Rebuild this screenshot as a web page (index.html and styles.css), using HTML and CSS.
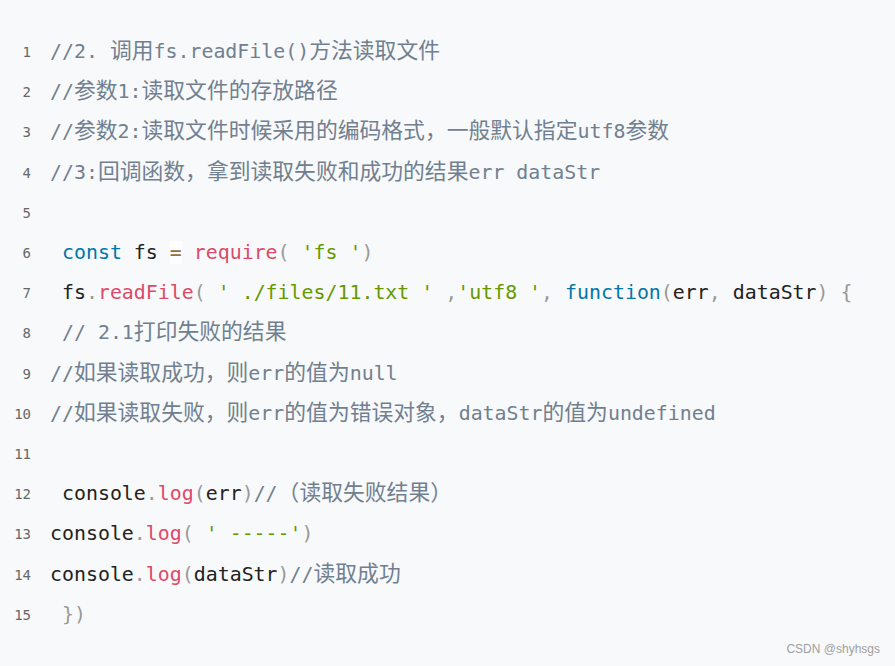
FILE: index.html
```html
<!DOCTYPE html>
<html lang="zh-CN">
<head>
<meta charset="utf-8">
<title>code</title>
<link rel="stylesheet" href="styles.css">
</head>
<body>
<div class="page">
  <div class="code">
    <div class="line"><span class="ln">1</span><span class="src"><span class="c">//2. <span class="zh">调用</span>fs.readFile()<span class="zh">方法读取文件</span></span></span></div>
    <div class="line"><span class="ln">2</span><span class="src"><span class="c">//<span class="zh">参数</span>1:<span class="zh">读取文件的存放路径</span></span></span></div>
    <div class="line"><span class="ln">3</span><span class="src"><span class="c">//<span class="zh">参数</span>2:<span class="zh">读取文件时候采用的编码格式，一般默认指定</span>utf8<span class="zh">参数</span></span></span></div>
    <div class="line"><span class="ln">4</span><span class="src"><span class="c">//3:<span class="zh">回调函数，拿到读取失败和成功的结果</span>err dataStr</span></span></div>
    <div class="line"><span class="ln">5</span><span class="src"></span></div>
    <div class="line"><span class="ln">6</span><span class="src"> <span class="k">const</span> fs <span class="o">=</span> <span class="f">require</span><span class="p">(</span> <span class="s">'fs '</span><span class="p">)</span></span></div>
    <div class="line"><span class="ln">7</span><span class="src"> fs<span class="p">.</span><span class="f">readFile</span><span class="p">(</span> <span class="s">' ./files/11.txt '</span> <span class="p">,</span><span class="s">'utf8 '</span><span class="p">,</span> <span class="k">function</span><span class="p">(</span>err<span class="p">,</span> dataStr<span class="p">)</span> <span class="p">{</span></span></div>
    <div class="line"><span class="ln">8</span><span class="src"> <span class="c">// 2.1<span class="zh">打印失败的结果</span></span></span></div>
    <div class="line"><span class="ln">9</span><span class="src"><span class="c">//<span class="zh">如果读取成功，则</span>err<span class="zh">的值为</span>null</span></span></div>
    <div class="line"><span class="ln">10</span><span class="src"><span class="c">//<span class="zh">如果读取失败，则</span>err<span class="zh">的值为错误对象，</span>dataStr<span class="zh">的值为</span>undefined</span></span></div>
    <div class="line"><span class="ln">11</span><span class="src"></span></div>
    <div class="line"><span class="ln">12</span><span class="src"> console<span class="p">.</span><span class="f">log</span><span class="p">(</span>err<span class="p">)</span><span class="c">//<span class="zh">（读取失败结果）</span></span></span></div>
    <div class="line"><span class="ln">13</span><span class="src">console<span class="p">.</span><span class="f">log</span><span class="p">(</span> <span class="s">' -----'</span><span class="p">)</span></span></div>
    <div class="line"><span class="ln">14</span><span class="src">console<span class="p">.</span><span class="f">log</span><span class="p">(</span>dataStr<span class="p">)</span><span class="c">//<span class="zh">读取成功</span></span></span></div>
    <div class="line"><span class="ln">15</span><span class="src"> <span class="p">})</span></span></div>
  </div>
  <div class="mark">CSDN @shyhsgs</div>
</div>
</body>
</html>
```
FILE: styles.css
```css
html, body {
  margin: 0;
  padding: 0;
  background: #f8f9fa;
}
.page {
  width: 895px;
  height: 666px;
  background: #f8f9fa;
  padding-top: 32px;
  box-sizing: border-box;
}
.code {
  display: flex;
  flex-direction: column;
}
.line {
  display: flex;
  align-items: center;
  height: 40.2px;
}
.ln {
  width: 31px;
  flex: none;
  text-align: right;
  font-family: "DejaVu Sans Mono", monospace;
  font-size: 14px;
  color: #666;
}
.src {
  margin-left: 19px;
  white-space: pre;
  font-family: "DejaVu Sans Mono", "Noto Sans CJK SC", monospace;
  font-size: 19.9px;
  line-height: 40px;
  color: #222;
}
.zh {
  font-family: "Noto Sans CJK SC", sans-serif;
  font-size: 21.8px;
  line-height: 20px;
}
.c { color: #708090; }
.k { color: #0077aa; }
.f { color: #dd4a68; }
.s { color: #669900; }
.p { color: #999999; }
.o { color: #9a6e3a; background: rgba(255, 255, 255, 0.7); }
.mark {
  margin-top: 7px;
  padding-right: 15px;
  text-align: right;
  font-family: "Liberation Sans", Arial, sans-serif;
  font-size: 12px;
  line-height: 14px;
  color: #a0a0a0;
}
```
